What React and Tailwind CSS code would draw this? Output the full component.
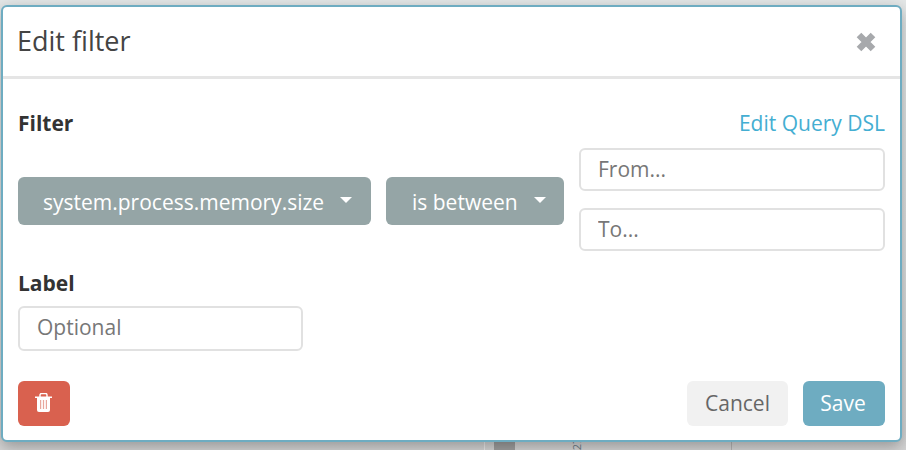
import React from "react";

const Caret = () => (
  <span className="ml-[16px] w-0 h-0 border-x-[6.5px] border-x-transparent border-t-[6px] border-t-white -translate-y-[1px]" />
);

const CloseIcon = () => (
  <svg width="20" height="20" viewBox="0 0 20 20" className="mr-[9px] mt-[1px]">
    <path d="M3 3L17 17M17 3L3 17" stroke="#a7a9ac" strokeWidth="6.5" strokeLinecap="butt" />
  </svg>
);

const TrashIcon = () => (
  <svg width="17" height="19" viewBox="0 0 17 19" className="-mt-[3px] -ml-[1px]">
    <path d="M0 3.5h17v1.5H0z" fill="#fff" />
    <path d="M5 4V2a1.5 1.5 0 0 1 1.5-1.5h4A1.5 1.5 0 0 1 12 2v2" fill="none" stroke="#fff" strokeWidth="1.4" />
    <path d="M2 4.5h13V17a2 2 0 0 1-2 2H4a2 2 0 0 1-2-2z" fill="#fff" />
    <path d="M5 7h1.2v9H5zM7.9 7h1.2v9H7.9zM10.8 7H12v9h-1.2z" fill="#e8a79d" />
  </svg>
);

const App = () => {
  return (
    <div className="relative w-[906px] h-[450px] overflow-hidden bg-gradient-to-b from-[#e4e7e7] via-[#dfe1e1] to-[#d6d6d6] font-['Open_Sans',sans-serif] text-[21px] text-[#333]">
      {/* page behind the modal */}
      <div className="absolute left-[484px] top-[441px] w-px h-[9px] bg-[#ececec]" />
      <div className="absolute left-[494px] top-[441px] w-[21px] h-[9px] bg-[#a0a0a0]" />
      <div className="absolute left-[731px] top-[441px] w-px h-[9px] bg-[#b5b5b5]" />
      <span className="absolute left-[571px] top-[437px] text-[11px] leading-[14px] text-[#6f7f8a] -rotate-90">27</span>

      <div className="relative ml-[1px] mt-[5px] w-[901px] h-[437px] bg-white border-2 border-[#6eacc1] rounded-[6px] shadow-[0_5px_15px_rgba(0,0,0,0.3)] flex flex-col">
        <div className="h-[72px] shrink-0 border-b-[3px] border-[#e5e5e5] px-[15px] flex items-center justify-between">
          <span className="text-[27px] leading-[33px] text-[#444] -mt-[3px] -ml-[1px]">Edit filter</span>
          <CloseIcon />
        </div>

        <div className="px-[15px] pt-[32px] flex-1 flex flex-col">
          <div className="flex justify-between items-baseline leading-[25px]">
            <span className="font-bold">Filter</span>
            <span className="text-[#44aed2]">Edit Query DSL</span>
          </div>

          <div className="flex items-center mt-[12px] gap-[15px]">
            <div className="w-[353px] h-[48px] mt-[3px] bg-[#95a5a6] rounded-[6px] text-white flex items-center pl-[25px]">
              <span className="mt-[3px]">system.process.memory.size</span>
              <Caret />
            </div>
            <div className="w-[178px] h-[48px] mt-[3px] bg-[#95a5a6] rounded-[6px] text-white flex items-center pl-[26px]">
              <span className="mt-[3px]">is between</span>
              <Caret />
            </div>
            <div className="flex-1 flex flex-col gap-[17px]">
              <input
                placeholder="From..."
                className="h-[43px] w-full border-2 border-[#e1e1e1] rounded-[6px] pl-[17px] pr-[18px] pb-[2px] outline-none placeholder:text-[#777]"
              />
              <input
                placeholder="To..."
                className="h-[43px] w-full border-2 border-[#e1e1e1] rounded-[6px] pl-[17px] pr-[18px] pb-[2px] outline-none placeholder:text-[#777]"
              />
            </div>
          </div>

          <div className="font-bold leading-[25px] mt-[20px]">Label</div>
          <input
            placeholder="Optional"
            className="mt-[10px] h-[45px] w-[285px] border-2 border-[#e1e1e1] rounded-[6px] pl-[17px] pr-[18px] pb-[4px] outline-none placeholder:text-[#777]"
          />

          <div className="flex items-center mt-[30px]">
            <button className="w-[52px] h-[45px] bg-[#d9614f] rounded-[6px] flex items-center justify-center">
              <TrashIcon />
            </button>
            <button className="ml-auto w-[101px] h-[45px] bg-[#f1f1f1] rounded-[6px] text-[#666]">Cancel</button>
            <button className="ml-[15px] w-[82px] h-[45px] bg-[#6eacc1] rounded-[6px] text-white pr-[2px]">Save</button>
          </div>
        </div>
      </div>
    </div>
  );
};

export default App;
